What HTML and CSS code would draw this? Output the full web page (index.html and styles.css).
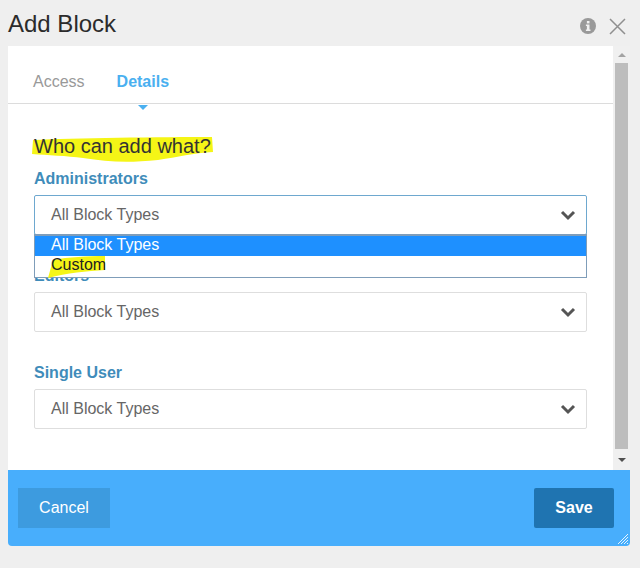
FILE: index.html
```html
<!DOCTYPE html>
<html lang="en">
<head>
    <meta charset="UTF-8">
    <title>Add Block</title>
    <link rel="stylesheet" href="styles.css">
</head>
<body>
    <div class="dialog">
        <div class="titleBar">
            <span class="title">Add Block</span>
            <div class="titleIcons">
                <svg class="infoIcon" width="16" height="16" viewBox="0 0 16 16">
                    <circle cx="8" cy="8" r="8" fill="#999"/>
                    <rect x="6.9" y="3" width="2.6" height="2.4" fill="#f0f0f0"/>
                    <path d="M5.9 6.6h3.6v4.9h1v1.4H5.9v-1.4h1V8H5.9z" fill="#f0f0f0"/>
                </svg>
                <svg class="closeIcon" width="17" height="17" viewBox="0 0 17 17">
                    <path d="M1 1l15 15M16 1L1 16" stroke="#8f8f8f" stroke-width="1.5" fill="none"/>
                </svg>
            </div>
        </div>
        <div class="content">
            <div class="scrollArea">
                <div class="tabs">
                    <span class="tab">Access</span>
                    <span class="tab active">Details</span>
                </div>
                <div class="form">
                    <h2 class="heading">
                        <svg class="marker" width="182" height="30" viewBox="0 0 182 30">
                            <path d="M1 6C40 4 130 3 180 3l1 15c-20 1-35 5-55 8-30 3-50 2-75-2C35 22 15 21 0 20z" fill="#f5f516"/>
                        </svg>
                        <span class="headingText">Who can add what?</span>
                    </h2>
                    <div class="field first">
                        <label>Administrators</label>
                        <div class="selectBox open">
                            All Block Types
                            <svg class="chevron" width="16" height="11" viewBox="0 0 16 11"><path d="M2 2l6 6 6-6" stroke="#555" stroke-width="3" fill="none"/></svg>
                            <div class="dropdown">
                                <div class="option selected">All Block Types</div>
                                <div class="option">
                                    <svg class="marker" width="58" height="24" viewBox="0 0 58 24">
                                        <path d="M5 4C20 1 40 0 57 0v14c-18 1-38 3-57 8z" fill="#f5f516"/>
                                    </svg>
                                    <span class="optionText">Custom</span>
                                </div>
                            </div>
                        </div>
                    </div>
                    <div class="field">
                        <label>Editors</label>
                        <div class="selectBox">
                            All Block Types
                            <svg class="chevron" width="16" height="11" viewBox="0 0 16 11"><path d="M2 2l6 6 6-6" stroke="#555" stroke-width="3" fill="none"/></svg>
                        </div>
                    </div>
                    <div class="field">
                        <label>Single User</label>
                        <div class="selectBox">
                            All Block Types
                            <svg class="chevron" width="16" height="11" viewBox="0 0 16 11"><path d="M2 2l6 6 6-6" stroke="#555" stroke-width="3" fill="none"/></svg>
                        </div>
                    </div>
                </div>
            </div>
            <div class="scrollbar">
                <div class="arrowUp"></div>
                <div class="thumb"></div>
                <div class="arrowDown"></div>
            </div>
        </div>
        <div class="footer">
            <button class="cancelButton">Cancel</button>
            <button class="saveButton">Save</button>
            <svg class="grip" width="10" height="10" viewBox="0 0 10 10">
                <path d="M0 10L10 0M3 10l7-7M6 10l4-4M9 10l1-1" stroke="#e4f3fd" stroke-width="1" fill="none"/>
            </svg>
        </div>
    </div>
</body>
</html>
```

FILE: styles.css
```css
body {
    font-family: "Liberation Sans", Arial, sans-serif;
    margin: 0;
    padding: 0;
    height: 568px;
    background-color: #efefef;
    overflow: hidden;
}
.dialog {
    width: 622px;
    margin-left: 8px;
}
.titleBar {
    height: 46px;
    display: flex;
    align-items: center;
    justify-content: space-between;
}
.title {
    font-size: 24px;
    color: #2b2b2b;
    position: relative;
    top: 1px;
}
.titleIcons {
    display: flex;
    align-items: center;
    gap: 13px;
    margin-right: 4px;
    position: relative;
    top: 3px;
}
.infoIcon, .closeIcon {
    display: block;
}
.content {
    display: flex;
    height: 424px;
}
.scrollArea {
    width: 605px;
    background-color: #fff;
}
.tabs {
    height: 58px;
    box-sizing: border-box;
    border-bottom: 1px solid #dcdcdc;
    padding: 27px 0 0 25px;
    display: flex;
    gap: 32px;
    font-size: 16px;
}
.tab {
    color: #999;
}
.tab.active {
    color: #4ab0f0;
    font-weight: bold;
    position: relative;
}
.tab.active::after {
    content: "";
    position: absolute;
    left: 21px;
    top: 32px;
    border-left: 5px solid transparent;
    border-right: 5px solid transparent;
    border-top: 5px solid #4ab0f0;
}
.form {
    padding: 0 26px;
}
.heading {
    position: relative;
    margin: 31px 0 0 0;
    height: 23px;
    font-size: 20px;
    line-height: 23px;
    font-weight: normal;
    color: #333;
}
.heading .marker {
    position: absolute;
    left: -2px;
    top: -1px;
}
.headingText {
    position: relative;
}
.field {
    margin-top: 32px;
}
.field.first {
    margin-top: 12px;
}
.field label {
    display: block;
    height: 18px;
    line-height: 18px;
    font-size: 16px;
    font-weight: bold;
    color: #3f8cba;
    margin-bottom: 7px;
}
.selectBox {
    position: relative;
    height: 40px;
    box-sizing: border-box;
    border: 1px solid #dedede;
    border-radius: 2px;
    padding-left: 16px;
    line-height: 37px;
    font-size: 16px;
    color: #666;
}
.selectBox.open {
    border-color: #6ea8cf;
}
.chevron {
    position: absolute;
    right: 10px;
    top: 14px;
}
.dropdown {
    position: absolute;
    z-index: 2;
    left: -1px;
    right: -1px;
    top: 38px;
    height: 44px;
    box-sizing: border-box;
    border: 1px solid #7f9db9;
    border-top-width: 2px;
    background-color: #fff;
    line-height: 18px;
    color: #222;
}
.option {
    position: relative;
    height: 20px;
    padding-left: 16px;
}
.option.selected {
    background-color: #1e90ff;
    color: #fff;
}
.option .marker {
    position: absolute;
    left: 13px;
    top: 0;
}
.optionText {
    position: relative;
}
.scrollbar {
    width: 17px;
    background-color: #f0f0f0;
    position: relative;
}
.thumb {
    position: absolute;
    left: 2px;
    top: 17px;
    width: 13px;
    height: 386px;
    background-color: #bdbdbd;
}
.arrowUp {
    position: absolute;
    left: 5px;
    top: 7px;
    border-left: 4px solid transparent;
    border-right: 4px solid transparent;
    border-bottom: 4px solid #a3a3a3;
}
.arrowDown {
    position: absolute;
    left: 5px;
    top: 412px;
    border-left: 4px solid transparent;
    border-right: 4px solid transparent;
    border-top: 4px solid #505050;
}
.footer {
    position: relative;
    height: 76px;
    box-sizing: border-box;
    padding: 18px 16px 18px 10px;
    display: flex;
    justify-content: space-between;
    background-color: #48aefc;
    border-radius: 0 0 4px 4px;
}
.cancelButton, .saveButton {
    height: 40px;
    border: none;
    font-family: inherit;
    font-size: 16px;
    color: #fff;
    padding: 0;
}
.cancelButton {
    width: 92px;
    background-color: #3d9bdf;
}
.saveButton {
    width: 80px;
    background-color: #1f74b1;
    font-weight: bold;
    border-radius: 2px;
}
.grip {
    position: absolute;
    right: 2px;
    bottom: 2px;
}
```
